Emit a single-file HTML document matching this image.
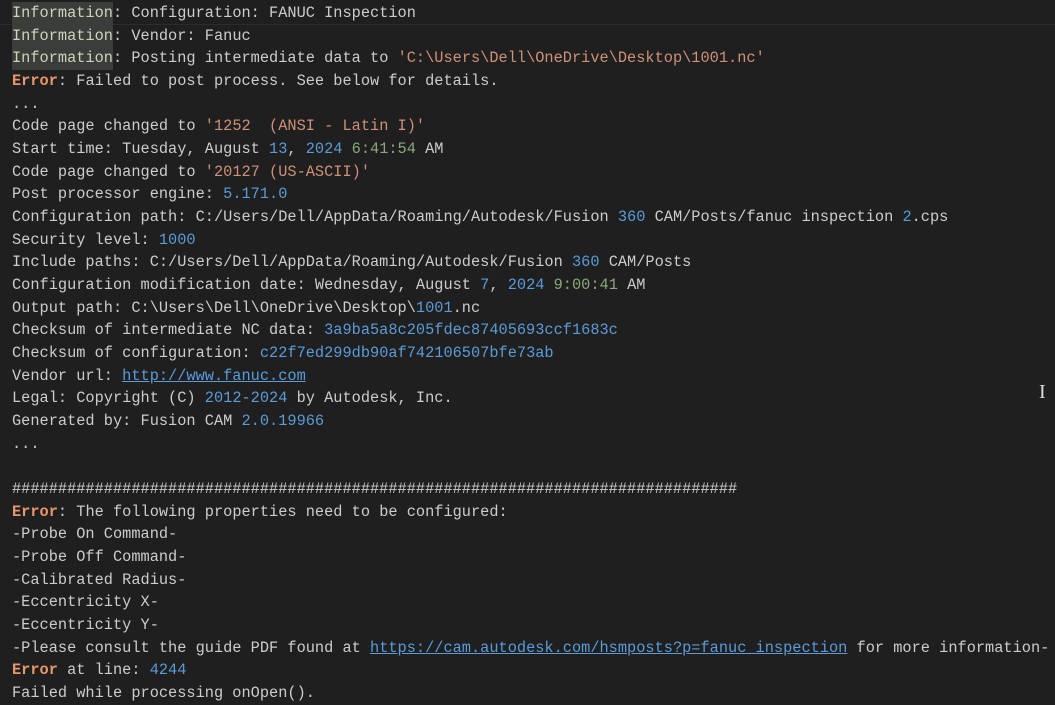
<!DOCTYPE html>
<html><head><meta charset="utf-8"><style>
html,body{margin:0;padding:0;background:#1f1f1f;width:1055px;height:705px;overflow:hidden}
#c{position:absolute;left:12px;top:2px;font-family:"Liberation Mono",monospace;font-size:15.3px;line-height:22.67px;color:#cccccc;white-space:pre}
.i{color:#c9d6b8;background:#3b3d3b;display:inline-block;height:22.67px;vertical-align:top}
.e{color:#e9976d;font-weight:bold}
.s{color:#ce9178}
.n{color:#5a9bd8}
.g{color:#8aa97a}
.u{color:#5a9bd8;text-decoration:underline}
#hl{position:absolute;left:0;top:1px;width:1055px;height:23px;border-bottom:1px solid #2c2c2c}
#cur{position:absolute;left:1039px;top:381px;color:#ddd;font-family:"Liberation Serif",serif;font-size:20px}
</style></head><body>
<div id="hl"></div>
<div id="c"><span class="i">Information</span>: Configuration: FANUC Inspection
<span class="i">Information</span>: Vendor: Fanuc
<span class="i">Information</span>: Posting intermediate data to <span class="s">'C:\Users\Dell\OneDrive\Desktop\1001.nc'</span>
<span class="e">Error</span>: Failed to post process. See below for details.
...
Code page changed to <span class="s">'1252  (ANSI - Latin I)'</span>
Start time: Tuesday, August <span class="n">13</span>, <span class="n">2024</span> <span class="g">6:41:54</span> AM
Code page changed to <span class="s">'20127 (US-ASCII)'</span>
Post processor engine: <span class="n">5.171.0</span>
Configuration path: C:/Users/Dell/AppData/Roaming/Autodesk/Fusion <span class="n">360</span> CAM/Posts/fanuc inspection <span class="n">2</span>.cps
Security level: <span class="n">1000</span>
Include paths: C:/Users/Dell/AppData/Roaming/Autodesk/Fusion <span class="n">360</span> CAM/Posts
Configuration modification date: Wednesday, August <span class="n">7</span>, <span class="n">2024</span> <span class="g">9:00:41</span> AM
Output path: C:\Users\Dell\OneDrive\Desktop\<span class="n">1001</span>.nc
Checksum of intermediate NC data: <span class="n">3a9ba5a8c205fdec87405693ccf1683c</span>
Checksum of configuration: <span class="n">c22f7ed299db90af742106507bfe73ab</span>
Vendor url: <span class="u">http://www.fanuc.com</span>
Legal: Copyright (C) <span class="n">2012-2024</span> by Autodesk, Inc.
Generated by: Fusion CAM <span class="n">2.0.19966</span>
...

###############################################################################
<span class="e">Error</span>: The following properties need to be configured:
-Probe On Command-
-Probe Off Command-
-Calibrated Radius-
-Eccentricity X-
-Eccentricity Y-
-Please consult the guide PDF found at <span class="u">https://cam.autodesk.com/hsmposts?p=fanuc_inspection</span> for more information-
<span class="e">Error</span> at line: <span class="n">4244</span>
Failed while processing onOpen().</div>
<div id="cur">I</div>
</body></html>
